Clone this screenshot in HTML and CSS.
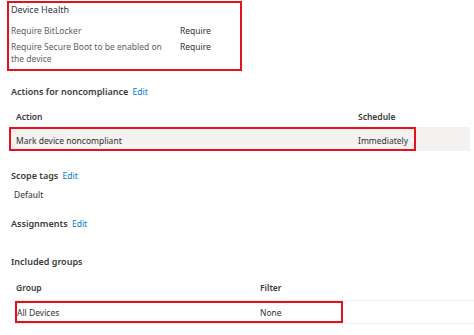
FILE: index.html
```html
<!DOCTYPE html>
<html lang="en">
<head>
    <meta charset="UTF-8">
    <meta name="viewport" content="width=device-width, initial-scale=1.0">
    <title>Compliance policy</title>
    <link rel="stylesheet" href="styles.css">
</head>
<body>
    <div class="page">
        <div class="health">
            <div class="healthTitle">Device Health</div>
            <div class="setting first">
                <div class="name">Require BitLocker</div>
                <div class="value">Require</div>
            </div>
            <div class="setting">
                <div class="name">Require Secure Boot to be enabled on the device</div>
                <div class="value">Require</div>
            </div>
        </div>

        <div class="heading actionsHeading">Actions for noncompliance <a class="edit" href="#">Edit</a></div>
        <div class="actionHead">
            <div class="colAction">Action</div>
            <div class="colSchedule">Schedule</div>
        </div>
        <div class="actionRow">
            <div class="mark">
                <div class="colAction">Mark device noncompliant</div>
                <div class="colSchedule">Immediately</div>
            </div>
        </div>

        <div class="heading scopeHeading">Scope tags <a class="edit" href="#">Edit</a></div>
        <div class="tag">Default</div>

        <div class="heading assignHeading">Assignments <a class="edit" href="#">Edit</a></div>

        <div class="heading groupsHeading">Included groups</div>
        <div class="groupHead">
            <div class="colGroup">Group</div>
            <div class="colFilter">Filter</div>
        </div>
        <div class="groupRow">
            <div class="mark">
                <div class="colGroup">All Devices</div>
                <div class="colFilter">None</div>
            </div>
        </div>
    </div>
</body>
</html>
```

FILE: styles.css
```css
body {
    margin: 0;
    background: #fff;
    font-family: "Noto Sans", "Open Sans", sans-serif;
    font-size: 8.5px;
    color: #323130;
}
.page {
    padding-top: 1px;
}
.health {
    margin-left: 7px;
    width: 229px;
    height: 66px;
    border: 2px solid #e3121b;
    padding-left: 2px;
}
.healthTitle {
    font-size: 9px;
    line-height: 14px;
    color: #323130;
}
.setting {
    display: grid;
    grid-template-columns: 169px 1fr;
    line-height: 12px;
    color: #605e5c;
    margin-top: 4px;
}
.setting.first {
    margin-top: 8px;
}
.setting .name {
    padding-right: 8px;
}
.setting .value {
    color: #323130;
}
.heading {
    margin-left: 11px;
    line-height: 14px;
    font-weight: 600;
    font-size: 9px;
    color: #3b3a39;
}
.edit {
    color: #0078d4;
    text-decoration: none;
    font-weight: 400;
    font-size: 8.5px;
    margin-left: 2px;
}
.actionsHeading {
    margin-top: 14px;
}
.actionHead {
    display: flex;
    height: 28px;
    line-height: 14px;
    padding-top: 11px;
    box-sizing: border-box;
    margin-left: 9px;
    font-weight: 600;
    color: #3b3a39;
}
.actionRow {
    margin-left: 9px;
    width: 461px;
    background: #f3f2f1;
}
.actionRow .mark {
    width: 403px;
    height: 20px;
    padding-top: 3px;
    box-sizing: content-box;
    border: 2px solid #e3121b;
    display: flex;
    align-items: center;
}
.actionRow .mark {
    height: 17px;
}
.colAction {
    width: 342px;
    padding-left: 5px;
}
.actionHead .colAction {
    padding-left: 7px;
}
.scopeHeading {
    margin-top: 18px;
}
.tag {
    margin-left: 14px;
    margin-top: 5px;
    line-height: 14px;
}
.assignHeading {
    margin-top: 15px;
}
.groupsHeading {
    margin-top: 24px;
}
.groupHead {
    display: flex;
    margin-left: 16px;
    height: 32px;
    padding-top: 12px;
    box-sizing: border-box;
    line-height: 14px;
    font-weight: 600;
    color: #3b3a39;
    border-bottom: 1px solid #edebe9;
}
.groupRow {
    margin-left: 15px;
    border-bottom: 1px solid #edebe9;
}
.groupRow .mark {
    width: 324px;
    height: 18px;
    border: 2px solid #e3121b;
    display: flex;
    align-items: center;
}
.colGroup {
    width: 244px;
}
.groupRow .colGroup {
    width: 243px;
}
```
